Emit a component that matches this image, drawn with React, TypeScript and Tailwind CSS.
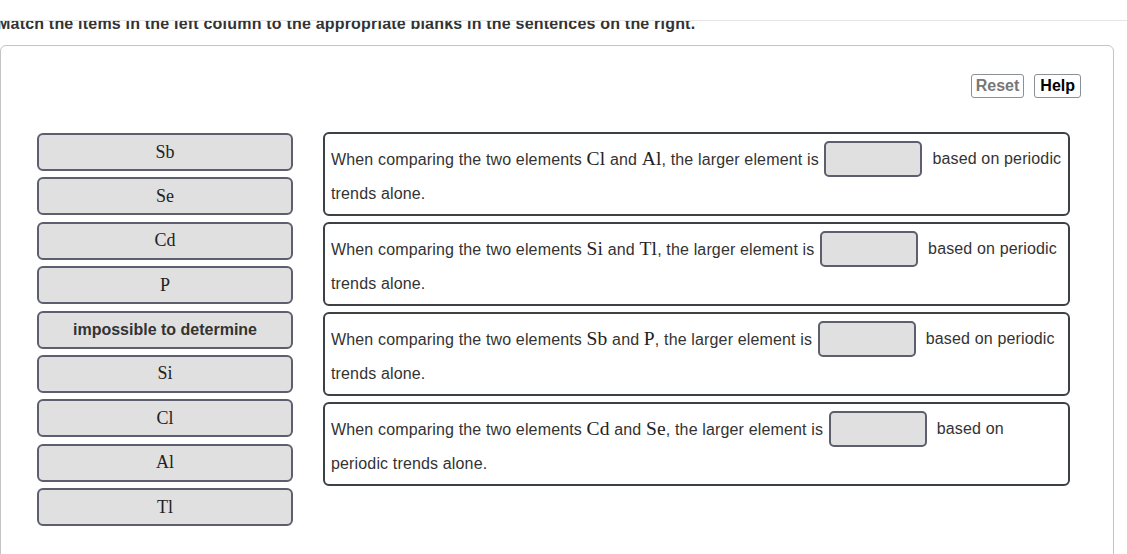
const items = ["Sb", "Se", "Cd", "P", "impossible to determine", "Si", "Cl", "Al", "Tl"];

const sentences = [
  { a: "Cl", b: "Al", line1: "based on periodic", line2: "trends alone." },
  { a: "Si", b: "Tl", line1: "based on periodic", line2: "trends alone." },
  { a: "Sb", b: "P", line1: "based on periodic", line2: "trends alone." },
  { a: "Cd", b: "Se", line1: "based on", line2: "periodic trends alone." },
];

function Sym({ children }: { children: string }) {
  return <span className="font-['Liberation_Serif',serif] text-[19.5px] text-[#222]">{children}</span>;
}

export default function App() {
  return (
    <div className="w-[1127px] h-[554px] overflow-hidden bg-white font-['Liberation_Sans',Arial,sans-serif]">
      {/* header, cut off at the top */}
      <div className="h-[20px]" />
      <div className="h-[12px] overflow-hidden border-t border-[#e6e6e6]">
        <div className="-mt-[6px] -ml-[3px] text-[16px] tracking-[0.2px] font-bold text-[#333] whitespace-nowrap leading-[18px]">
          Match the items in the left column to the appropriate blanks in the sentences on the right.
        </div>
      </div>

      <div className="mt-[13px] w-[1114px] h-[600px] border border-[#c4c4c4] rounded-t-md">
        <div className="flex justify-end gap-[10px] pt-[28px] pr-[32px]">
          <button className="h-[24px] px-[4px] border border-[#8a9096] rounded-[3px] bg-white text-[16px] font-bold text-[#777] leading-none">
            Reset
          </button>
          <button className="h-[24px] px-[5px] border border-[#8a9096] rounded-[3px] bg-white text-[16px] font-bold text-black leading-none">
            Help
          </button>
        </div>

        <div className="flex gap-[30px] pl-[36px] mt-[34px]">
          <div className="w-[256px] flex flex-col gap-[6.4px] pt-px">
            {items.map((it) => (
              <div
                key={it}
                className="h-[38px] flex items-center justify-center bg-[#e0e0e0] border-2 border-[#5e5f6e] rounded-[6px]"
              >
                {it.length > 3 ? (
                  <span className="text-[16px] font-bold text-[#333]">{it}</span>
                ) : (
                  <span className="font-['Liberation_Serif',serif] text-[18px] text-[#222]">{it}</span>
                )}
              </div>
            ))}
          </div>

          <div className="w-[747px] flex flex-col gap-[6px]">
            {sentences.map((s) => (
              <div
                key={s.a}
                className="h-[84px] border-2 border-[#3c4146] rounded-[6px] px-[6px] pt-[7px] text-[16px] tracking-[0.15px] text-[#333]"
              >
                <div className="flex items-center h-[36px]">
                  <span className="whitespace-pre">
                    When comparing the two elements <Sym>{s.a}</Sym> and <Sym>{s.b}</Sym>, the larger element is{" "}
                  </span>
                  <span className="ml-px mr-[10px] w-[98px] h-[36px] bg-[#e0e0e0] border-2 border-[#5e5f6e] rounded-[5px]" />
                  <span>{s.line1}</span>
                </div>
                <div className="mt-[4px] leading-[26px]">{s.line2}</div>
              </div>
            ))}
          </div>
        </div>
      </div>
    </div>
  );
}
